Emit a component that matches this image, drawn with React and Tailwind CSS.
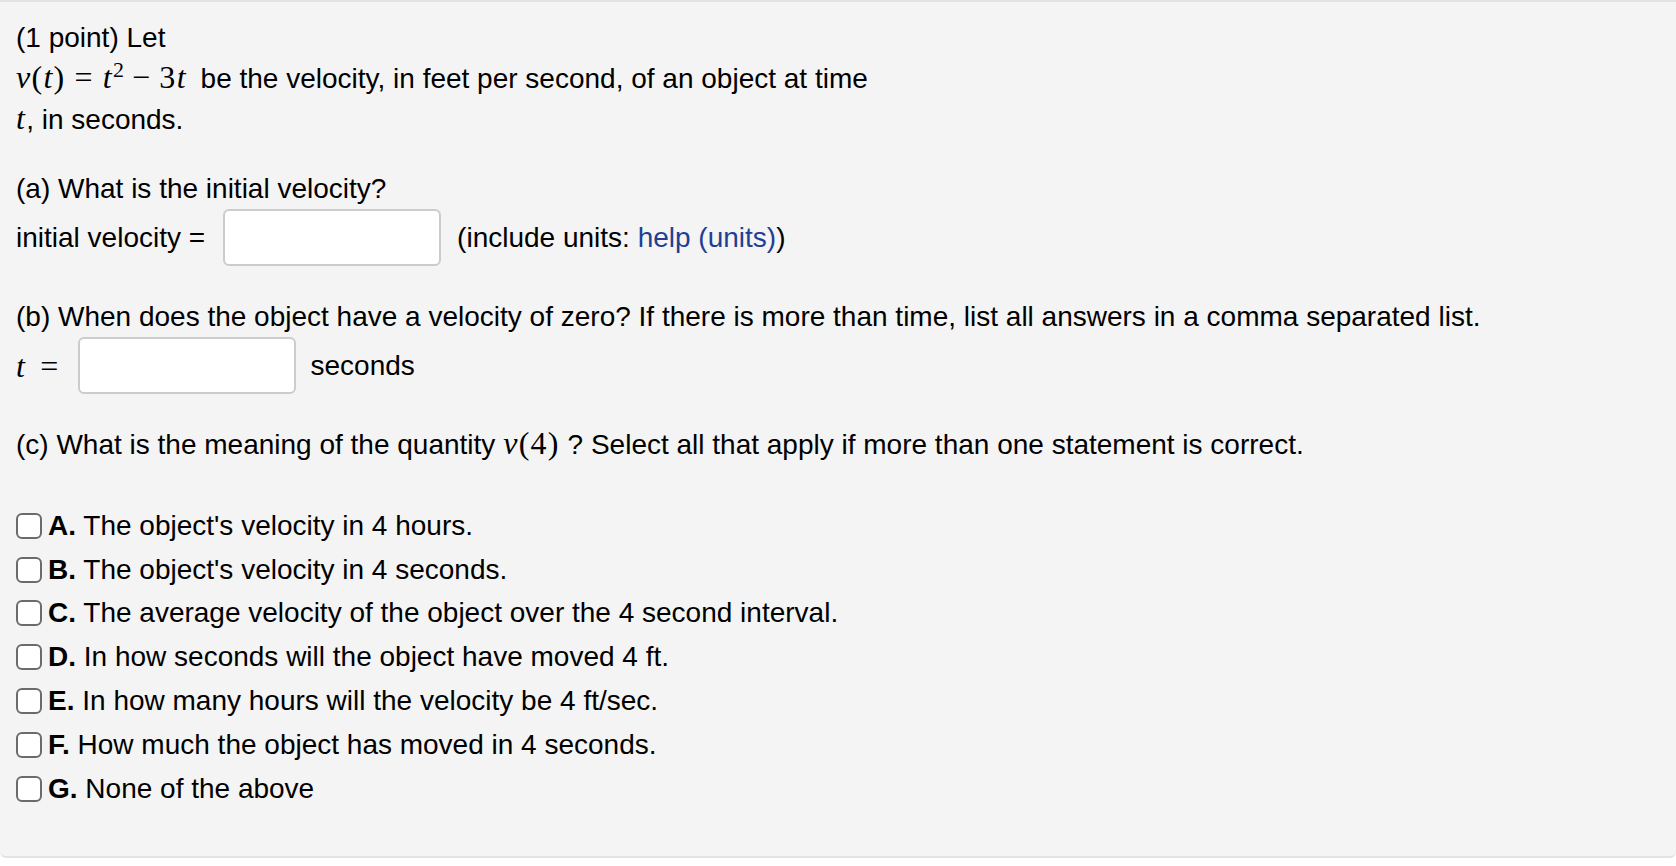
// WeBWorK-style velocity problem: prompt, two answer blanks and a checkbox list.
const options = [
  { letter: "A.", text: "The object's velocity in 4 hours." },
  { letter: "B.", text: "The object's velocity in 4 seconds." },
  { letter: "C.", text: "The average velocity of the object over the 4 second interval." },
  { letter: "D.", text: "In how seconds will the object have moved 4 ft." },
  { letter: "E.", text: "In how many hours will the velocity be 4 ft/sec." },
  { letter: "F.", text: "How much the object has moved in 4 seconds." },
  { letter: "G.", text: "None of the above" },
];

const M = ({ children, italic = true, className = "" }) => (
  <span
    className={`font-['Liberation_Serif',serif] text-[32px] leading-none tracking-[0.04em] ${italic ? "italic" : ""} ${className}`}
  >
    {children}
  </span>
);

const AnswerBox = () => (
  <input
    type="text"
    className="h-[57px] w-[218px] rounded-[6px] border-2 border-[#cccccc] bg-white px-2 outline-none"
  />
);

export default function App() {
  return (
    <div className="min-h-[866px] bg-white">
      <div className="h-[858px] rounded-b-[6px] border-y-2 border-[#e3e3e3] bg-[#f4f4f4] pl-[16px] pt-[15px] font-['Liberation_Sans',Arial,sans-serif] text-[28px] text-black">
        <div className="leading-[41px]">
          <div>(1 point) Let</div>
          <div>
            <M>v</M>
            <M italic={false}>(</M>
            <M>t</M>
            <M italic={false}>)</M>
            <M italic={false} className="mx-[9px]">=</M>
            <M>t</M>
            <sup className="font-['Liberation_Serif',serif] text-[22px] leading-none">2</sup>
            <M italic={false} className="mx-[8px]">−</M>
            <M italic={false}>3</M>
            <M className="mr-[6px]">t</M> be the velocity, in feet per second, of an object at
            time
          </div>
          <div>
            <M>t</M>, in seconds.
          </div>
        </div>

        <div className="mt-[28px] leading-[41px]">(a) What is the initial velocity?</div>
        <div className="flex h-[57px] items-center">
          <span>initial velocity =</span>
          <span className="ml-[18px]">
            <AnswerBox />
          </span>
          <span className="ml-[16px]">
            (include units: <span className="text-[#1f3f94]">help (units)</span>)
          </span>
        </div>

        <div className="mt-[30px] leading-[41px]">
          (b) When does the object have a velocity of zero? If there is more than time, list all
          answers in a comma separated list.
        </div>
        <div className="flex h-[57px] items-center">
          <M>t</M>
          <M italic={false} className="ml-[14px]">=</M>
          <span className="ml-[18px]">
            <AnswerBox />
          </span>
          <span className="ml-[15px]">seconds</span>
        </div>

        <div className="mt-[30px] leading-[41px]">
          (c) What is the meaning of the quantity <M>v</M>
          <M italic={false}>(4)</M> ? Select all that apply if more than one statement is
          correct.
        </div>

        <ul className="mt-[39px]">
          {options.map((o) => (
            <li key={o.letter} className="flex h-[43.8px] items-center">
              <span className="mr-[6px] h-[26px] w-[26px] shrink-0 rounded-[6px] border-2 border-[#6b6b6b] bg-white" />
              <span>
                <b>{o.letter}</b> {o.text}
              </span>
            </li>
          ))}
        </ul>
      </div>
    </div>
  );
}
